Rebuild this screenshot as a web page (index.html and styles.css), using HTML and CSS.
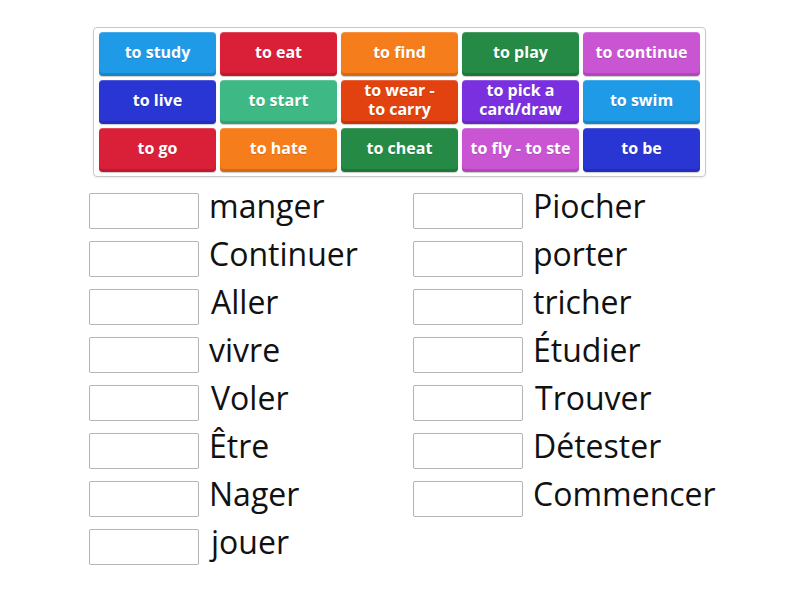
FILE: index.html
```html
<!DOCTYPE html>
<html>
<head>
<meta charset="utf-8">
<link rel="stylesheet" href="styles.css">
</head>
<body>
<div class="panel">
  <div class="tile blue">to study</div>
  <div class="tile red">to eat</div>
  <div class="tile orange">to find</div>
  <div class="tile green">to play</div>
  <div class="tile orchid">to continue</div>
  <div class="tile navy">to live</div>
  <div class="tile mint">to start</div>
  <div class="tile vermilion">to wear -<br>to carry</div>
  <div class="tile purple">to pick a<br>card/draw</div>
  <div class="tile blue">to swim</div>
  <div class="tile red">to go</div>
  <div class="tile orange">to hate</div>
  <div class="tile green">to cheat</div>
  <div class="tile orchid">to fly - to ste</div>
  <div class="tile navy">to be</div>
</div>
<div class="targets">
  <div class="col">
    <div class="row"><div class="box"></div><span class="word">manger</span></div>
    <div class="row"><div class="box"></div><span class="word">Continuer</span></div>
    <div class="row"><div class="box"></div><span class="word shift">Aller</span></div>
    <div class="row"><div class="box"></div><span class="word">vivre</span></div>
    <div class="row"><div class="box"></div><span class="word shift">Voler</span></div>
    <div class="row"><div class="box"></div><span class="word">Être</span></div>
    <div class="row"><div class="box"></div><span class="word">Nager</span></div>
    <div class="row"><div class="box"></div><span class="word shift">jouer</span></div>
  </div>
  <div class="col">
    <div class="row"><div class="box"></div><span class="word">Piocher</span></div>
    <div class="row"><div class="box"></div><span class="word">porter</span></div>
    <div class="row"><div class="box"></div><span class="word">tricher</span></div>
    <div class="row"><div class="box"></div><span class="word">Étudier</span></div>
    <div class="row"><div class="box"></div><span class="word shift">Trouver</span></div>
    <div class="row"><div class="box"></div><span class="word">Détester</span></div>
    <div class="row"><div class="box"></div><span class="word">Commencer</span></div>
  </div>
</div>
</body>
</html>
```
FILE: styles.css
```css
html, body {
  margin: 0;
  padding: 0;
  background: #ffffff;
  font-family: "Open Sans", "Noto Sans", sans-serif;
}

.panel {
  margin: 27px 0 0 93px;
  width: 601px;
  padding: 4px 5px 4px 5px;
  border: 1px solid #c8c8c8;
  border-radius: 4px;
  display: grid;
  grid-template-columns: repeat(5, 117px);
  grid-auto-rows: 44px;
  gap: 4px;
  box-shadow: 0 1px 2px rgba(0,0,0,0.08);
}

.tile {
  border-radius: 4px;
  color: #ffffff;
  font-weight: 700;
  font-size: 16px;
  line-height: 19px;
  display: flex;
  align-items: center;
  justify-content: center;
  text-align: center;
  padding-bottom: 4px;
  box-sizing: border-box;
  box-shadow: inset 0 -3px 0 rgba(0,0,0,0.14), inset 0 1px 0 rgba(255,255,255,0.18), 0 1px 1px rgba(0,0,0,0.2);
  text-shadow: 0 1px 0 rgba(0,0,0,0.15);
  white-space: nowrap;
}

.blue { background: #1f9ae6; }
.red { background: #d92038; }
.orange { background: #f57d1c; }
.green { background: #248a45; }
.orchid { background: #c955d3; }
.navy { background: #2a36d4; }
.mint { background: #3eb885; }
.vermilion { background: #e2420f; }
.purple { background: #7b30e0; }

.targets {
  display: flex;
  margin: 16px 0 0 89px;
}

.col {
  width: 324px;
  display: flex;
  flex-direction: column;
}

.row {
  height: 48px;
  display: flex;
  align-items: flex-start;
}

.box {
  width: 108px;
  height: 34px;
  border: 1px solid #b4b4b4;
  border-radius: 2px;
  flex: none;
}

.word {
  margin-left: 10px;
  font-size: 32px;
  line-height: 36px;
  color: #111111;
  margin-top: -5px;
}

.word.shift {
  margin-left: 12px;
}
```
